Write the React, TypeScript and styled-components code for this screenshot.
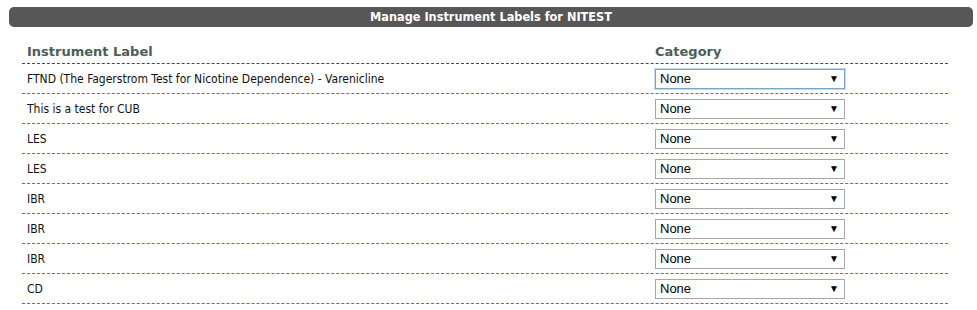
import styled, { createGlobalStyle } from "styled-components"

const labels = [
    "FTND (The Fagerstrom Test for Nicotine Dependence) - Varenicline",
    "This is a test for CUB",
    "LES",
    "LES",
    "IBR",
    "IBR",
    "IBR",
    "CD",
]

const GlobalStyle = createGlobalStyle`
    body {
        margin: 0;
        background: #fff;
        font-family: "DejaVu Sans", Verdana, sans-serif;
    }
`

const App = () => {
    return (
    <>
        <GlobalStyle />
        <Page>
            <TitleBar>Manage Instrument Labels for NITEST</TitleBar>
            <Table>
                <HeadRow>
                    <HeadCell>Instrument Label</HeadCell>
                    <HeadCell second>Category</HeadCell>
                </HeadRow>
                {labels.map((label, key) => {
                    return <Row key={key}>
                        <LabelCell>{label}</LabelCell>
                        <SelectCell>
                            <Select focused={key === 0}>
                                <span>None</span>
                                <Arrow>▼</Arrow>
                            </Select>
                        </SelectCell>
                    </Row>
                })}
            </Table>
        </Page>
    </>
    )
}

export default App

const Page = styled.div`
    padding: 7px 4px 0 9px;
`

const TitleBar = styled.div`
    height: 20px;
    line-height: 20px;
    background-color: #575757;
    border-radius: 5px;
    color: #fff;
    text-align: center;
    font-family: "DejaVu Sans Condensed", "DejaVu Sans", sans-serif;
    font-weight: bold;
    font-size: 12.6px;
`

const Table = styled.div`
    margin: 14px 25px 0 13px;
`

const HeadRow = styled.div`
    display: grid;
    grid-template-columns: 633px 1fr;
    height: 22px;
    border-bottom: 1px dashed #3e4f49;
`

const HeadCell = styled.div<{ second?: boolean }>`
    padding: 3px 0 0 ${p => p.second ? "0" : "5px"};
    color: #4b5e57;
    font-weight: bold;
    font-size: 13px;
`

const Row = styled.div`
    display: grid;
    grid-template-columns: 633px 1fr;
    height: 29px;
    align-items: center;
    border-bottom: 1px dashed #6f55ff;
`

const LabelCell = styled.div`
    padding-left: 5px;
    font-family: "DejaVu Sans Condensed", "DejaVu Sans", sans-serif;
    font-size: 12px;
    color: #111;
`

const SelectCell = styled.div`
    display: flex;
`

const Select = styled.div<{ focused?: boolean }>`
    box-sizing: border-box;
    width: 190px;
    height: 20px;
    display: flex;
    align-items: center;
    justify-content: space-between;
    padding: 0 5px 0 4px;
    border: 1px solid ${p => p.focused ? "#7da2ce" : "#a6a6a6"};
    box-shadow: ${p => p.focused ? "0 0 0 1px #c5d9f1" : "none"};
    background: #fff;
    font-family: "Liberation Sans", Arial, sans-serif;
    font-size: 13px;
    color: #000;
`

const Arrow = styled.span`
    font-size: 10px;
`
